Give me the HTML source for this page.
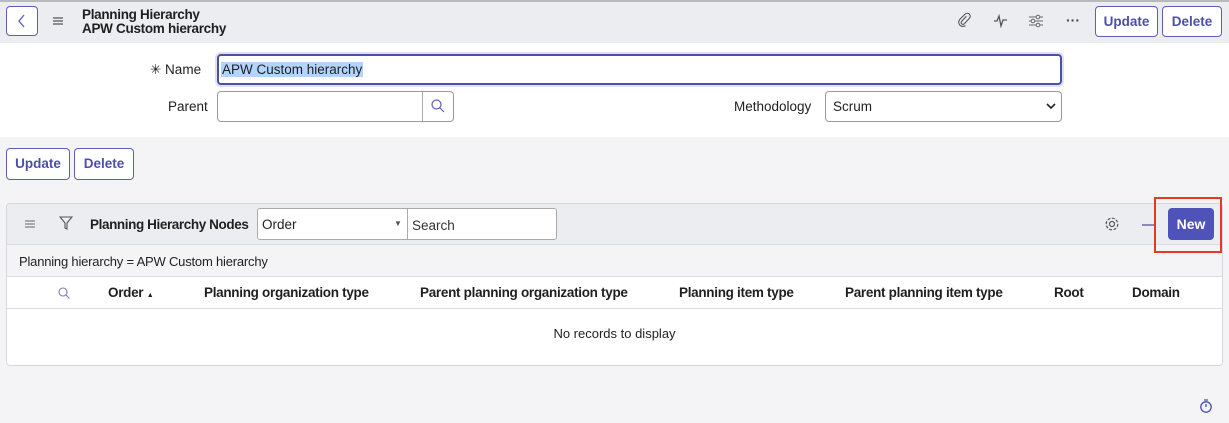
<!DOCTYPE html>
<html><head><meta charset="utf-8"><style>
*{box-sizing:border-box;margin:0;padding:0}
body{width:1229px;height:423px;overflow:hidden;background:#f4f4f7;font-family:"Liberation Sans",sans-serif;color:#1f1f1f;position:relative;font-size:13px}
.a{position:absolute}
.btn{position:absolute;border:1px solid #5b5fb8;border-radius:4px;background:#fff;color:#4b4fa8;font-weight:bold;font-size:13.5px;text-align:center}
.b{font-weight:bold}
</style></head><body>
<div class="a" style="left:0;top:0;width:1229px;height:2px;background:#b8b9bd"></div>
<div class="a" style="left:0;top:2px;width:1229px;height:41px;background:#ecedf1"></div>
<div class="a" style="left:6px;top:6px;width:32px;height:30px;border:1px solid #5b5fb8;border-radius:4px;background:#fff"></div>
<svg class="a" style="left:16px;top:13px" width="12" height="16"><path d="M8 2L3 8l5 6" fill="none" stroke="#5b5fb8" stroke-width="1.3"/></svg>
<svg class="a" style="left:52px;top:16px" width="12" height="10"><path d="M1 2h10M1 5h10M1 8h10" stroke="#555" stroke-width="1.3"/></svg>
<div class="a b" style="left:82px;top:8px;font-size:13.5px;line-height:14px;letter-spacing:-0.3px">Planning Hierarchy<br>APW Custom hierarchy</div>
<svg class="a" style="left:957px;top:12px" width="16" height="18"><path d="M11 5L5.5 11a2 2 0 003 3l6-6.5a3.5 3.5 0 00-5-5L3 9a5 5 0 007 7" fill="none" stroke="#555" stroke-width="1.3" transform="scale(.85)"/></svg>
<svg class="a" style="left:993px;top:14px" width="16" height="14"><path d="M1 7h3l2-5 2 10 2-6h4" fill="none" stroke="#555" stroke-width="1.3"/></svg>
<svg class="a" style="left:1028px;top:14px" width="16" height="14"><path d="M1 3h14M1 7h14M1 11h14" stroke="#666" stroke-width="1"/><circle cx="10" cy="3" r="1.8" fill="#ecedf1" stroke="#666"/><circle cx="5" cy="7" r="1.8" fill="#ecedf1" stroke="#666"/><circle cx="10" cy="11" r="1.8" fill="#ecedf1" stroke="#666"/></svg>
<div class="a b" style="left:1066px;top:12px;font-size:14px;color:#444">···</div>
<div class="btn" style="left:1095px;top:6px;width:63px;height:31px;line-height:29px">Update</div>
<div class="btn" style="left:1162px;top:6px;width:60px;height:31px;line-height:29px">Delete</div>

<div class="a" style="left:0;top:43px;width:1229px;height:94px;background:#fff"></div>
<div class="a" style="left:150px;top:62px;font-size:13.5px">✳︎&nbsp;Name</div>
<div class="a" style="left:217px;top:54px;width:845px;height:31px;border:2px solid #4b4fa8;border-radius:4px;box-shadow:0 0 0 2px #dfe0f4"></div>
<div class="a" style="left:221px;top:62px;background:#b3d4fc;font-size:13.5px;padding:0 1px">APW Custom hierarchy</div>
<div class="a" style="left:168px;top:99px;font-size:13.5px">Parent</div>
<div class="a" style="left:217px;top:91px;width:237px;height:31px;border:1px solid #9a9a9a;border-radius:4px;background:#fff"></div>
<div class="a" style="left:422px;top:92px;width:1px;height:29px;background:#aaa"></div>
<svg class="a" style="left:430px;top:98px" width="16" height="16"><circle cx="6.5" cy="6.5" r="4.5" fill="none" stroke="#5b5fb8" stroke-width="1.2"/><path d="M10 10l4 4" stroke="#5b5fb8" stroke-width="1.2"/></svg>
<div class="a" style="left:734px;top:99px;font-size:13.5px">Methodology</div>
<div class="a" style="left:825px;top:91px;width:237px;height:31px;border:1px solid #9a9a9a;border-radius:4px;background:#fff;padding:7px 7px;font-size:13.5px">Scrum</div>
<svg class="a" style="left:1046px;top:102px" width="10" height="8"><path d="M1 2l4 4 4-4" fill="none" stroke="#222" stroke-width="1.6"/></svg>

<div class="btn" style="left:6px;top:148px;width:64px;height:32px;line-height:30px">Update</div>
<div class="btn" style="left:74px;top:148px;width:60px;height:32px;line-height:30px">Delete</div>

<div class="a" style="left:6px;top:203px;width:1217px;height:163px;border:1px solid #d6d7db;border-radius:4px;background:#fff;overflow:hidden">
 <div class="a" style="left:0;top:0;width:1217px;height:41px;background:#ecedf1;border-bottom:1px solid #dcdde1"></div>
 <div class="a" style="left:0;top:41px;width:1217px;height:32px;background:#f4f4f7;border-bottom:1px solid #dcdde1"></div>
 <div class="a" style="left:0;top:104px;width:1217px;height:1px;background:#dcdde1"></div>
</div>
<svg class="a" style="left:24px;top:219px" width="12" height="10"><path d="M1 2h10M1 5h10M1 8h10" stroke="#666" stroke-width="1.1"/></svg>
<svg class="a" style="left:59px;top:216px" width="14" height="15"><path d="M1 1h12L8 7v6l-2-1V7z" fill="none" stroke="#555" stroke-width="1.1"/></svg>
<div class="a b" style="left:90px;top:217px;font-size:13.5px;letter-spacing:-0.4px">Planning Hierarchy Nodes</div>
<div class="a" style="left:257px;top:208px;width:300px;height:32px;border:1px solid #aaa;border-radius:3px;background:#fff"></div>
<div class="a" style="left:407px;top:209px;width:1px;height:30px;background:#aaa"></div>
<div class="a" style="left:262px;top:217px;font-size:13.5px">Order</div>
<div class="a" style="left:394px;top:219px;font-size:8px;color:#555">▼</div>
<div class="a" style="left:412px;top:218px;font-size:13.5px;color:#333">Search</div>
<svg class="a" style="left:1104px;top:216px" width="16" height="16"><circle cx="8" cy="8" r="2.5" fill="none" stroke="#555" stroke-width="1.2"/><circle cx="8" cy="8" r="5.8" fill="none" stroke="#555" stroke-width="1.2" stroke-dasharray="3 1.5"/></svg>
<div class="a" style="left:1142px;top:224px;width:12px;height:1.5px;background:#8a8ab5"></div>
<div class="a" style="left:1154px;top:197px;width:68px;height:56px;border:2px solid #e23a24"></div>
<div class="a b" style="left:1168px;top:208px;width:46px;height:32px;background:#4f52b9;border-radius:4px;color:#fff;text-align:center;line-height:32px;font-size:14px">New</div>
<div class="a" style="left:19px;top:254px;font-size:13px;letter-spacing:-0.2px">Planning hierarchy = APW Custom hierarchy</div>
<svg class="a" style="left:57px;top:286px" width="14" height="14"><circle cx="6" cy="6" r="4" fill="none" stroke="#7a7ac0" stroke-width="1.1"/><path d="M9 9l3.5 3.5" stroke="#7a7ac0" stroke-width="1.1"/></svg>
<div class="a b" style="top:285px;left:0;width:1229px;font-size:13.5px;letter-spacing:-0.3px">
<span class="a" style="left:108px">Order <span style="font-size:7px">▲</span></span>
<span class="a" style="left:204px;white-space:nowrap">Planning organization type</span>
<span class="a" style="left:420px;white-space:nowrap">Parent planning organization type</span>
<span class="a" style="left:679px;white-space:nowrap">Planning item type</span>
<span class="a" style="left:845px;white-space:nowrap">Parent planning item type</span>
<span class="a" style="left:1054px">Root</span>
<span class="a" style="left:1132px">Domain</span>
</div>
<div class="a" style="left:0;width:1229px;top:326px;text-align:center;font-size:13px">No records to display</div>
<svg class="a" style="left:1199px;top:398px" width="14" height="16"><circle cx="7" cy="9" r="5.2" fill="none" stroke="#4b4fa8" stroke-width="1.3"/><path d="M5 2h4M7 6v3" stroke="#4b4fa8" stroke-width="1.3"/></svg>
</body></html>
